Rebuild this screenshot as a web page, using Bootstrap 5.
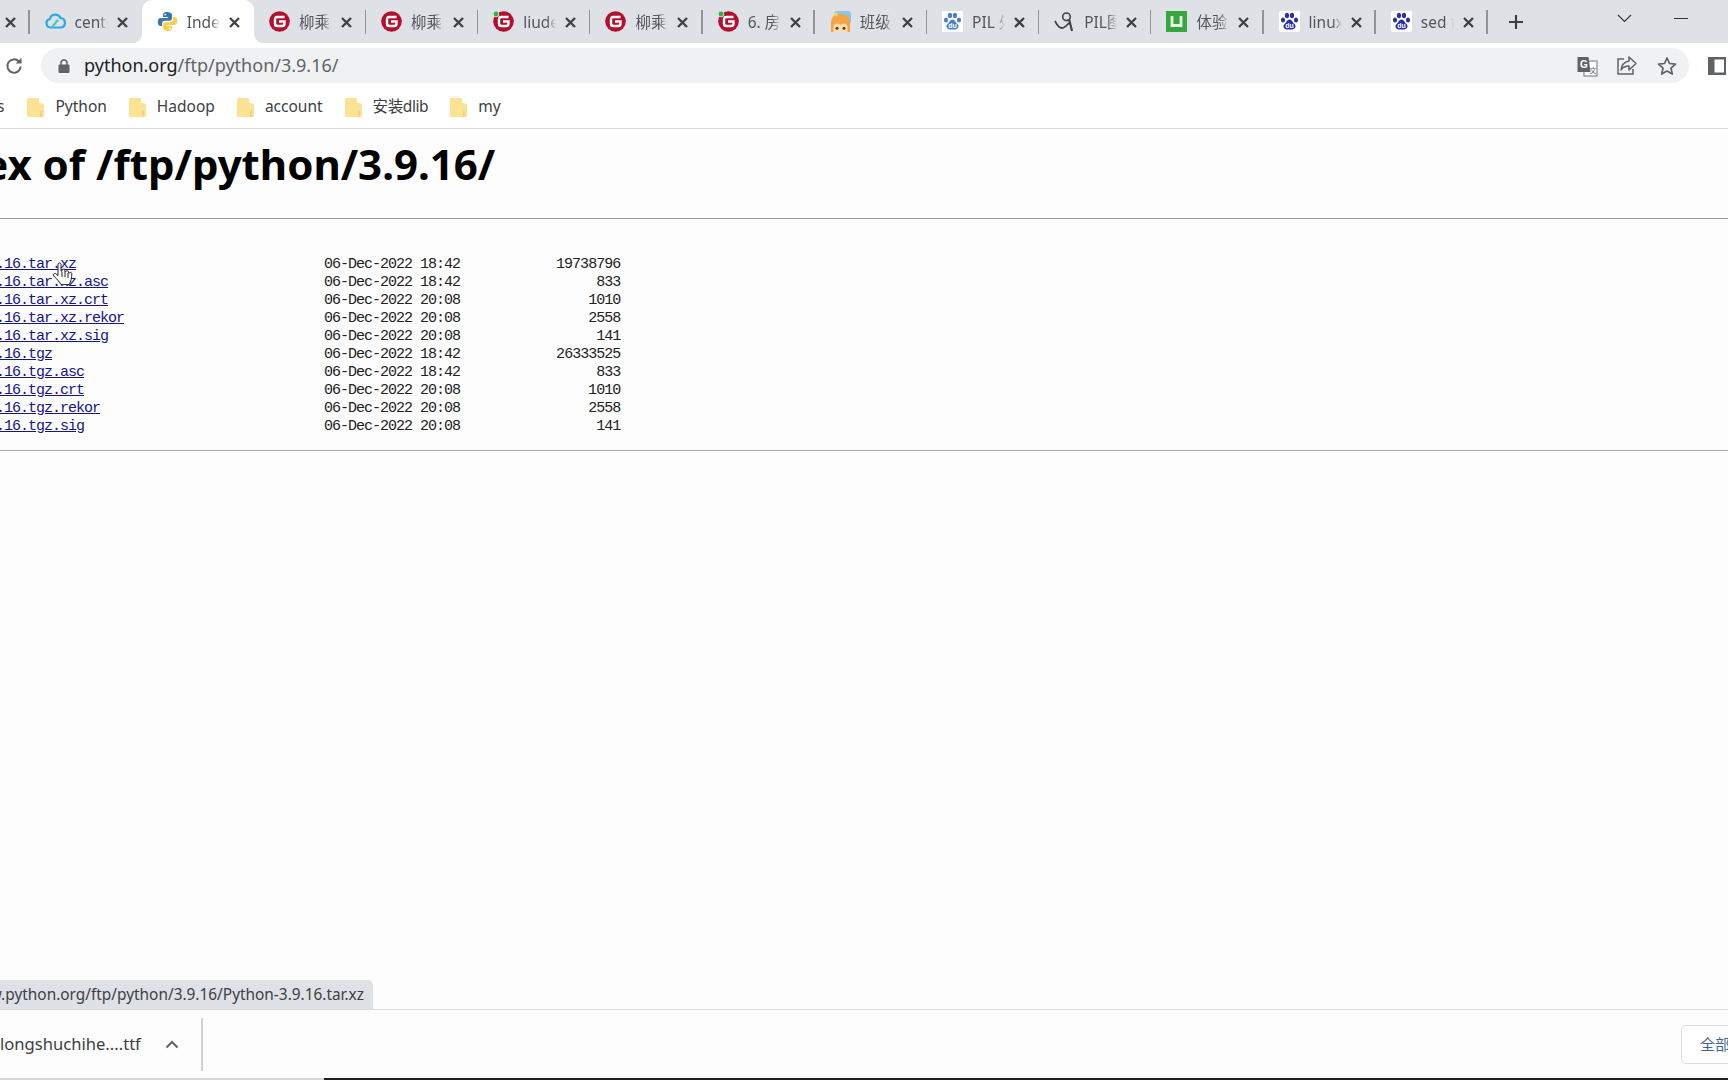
<!DOCTYPE html>
<html lang="en">
<head>
<meta charset="UTF-8">
<title>Index of /ftp/python/3.9.16/</title>
<link href="https://cdn.jsdelivr.net/npm/bootstrap@5.3.3/dist/css/bootstrap.min.css" rel="stylesheet">
<style>
    html, body { height: 100%; overflow: hidden; }
    body { font-family: "Noto Sans", "Noto Sans CJK SC", sans-serif; background: #fdfdfd; color: #000; }
    .shell { height: 1080px; width: 1728px; }
    .tabstrip { height: 43px; background: #dee1e6; padding-left: 0; flex: none; }
    .tab-item { width: 112.2px; height: 43px; flex: none; position: relative; padding-left: 15px; }
    .tab-item::after { content: ""; position: absolute; right: 0; top: 10px; height: 24px; width: 1.5px; background: #909498; }
    .tab-first { width: 29.5px; padding-left: 0; justify-content: flex-end; padding-right: 14px; }
    .tab-ico { width: 21px; height: 21px; flex: none; margin-top: -1px; }
    .tab-name { width: 33px; margin-left: 9px; margin-top: 1px; font-size: 15.5px; line-height: 21px; color: #53565a; white-space: nowrap; overflow: hidden;
        -webkit-mask-image: linear-gradient(to right, #000 72%, transparent 100%); mask-image: linear-gradient(to right, #000 72%, transparent 100%); }
    .tab-x { width: 11px; height: 11px; flex: none; margin-left: 9px; margin-top: 1px; }
    .tab-first .tab-x { margin-left: 0; }
    .tab-on { background: #fff; border-radius: 10px 10px 0 0; }
    .tab-on::after { left: -10px; right: auto; top: auto; bottom: 0; width: 10px; height: 10px; background: radial-gradient(circle at 0 0, #dee1e6 10px, #fff 10.5px); }
    .tab-on::before { content: ""; position: absolute; right: -10px; bottom: 0; width: 10px; height: 10px; background: radial-gradient(circle at 100% 0, #dee1e6 10px, #fff 10.5px); z-index: 1; }
    .tab-prev::after { display: none; }
    .tab-plus { width: 18px; height: 18px; margin-left: 19.5px; flex: none; }
    .win-chev { width: 15px; height: 9px; margin-left: 92px; margin-top: -7px; flex: none; }
    .win-min { width: 14px; margin-left: 42px; margin-top: -6px; background: #333; flex: none; height: 1.5px; }
    .toolbar { height: 45px; background: #fff; flex: none; }
    .reload-ico { width: 20px; height: 20px; margin-left: 4px; flex: none; }
    .omni { width: 1648px; height: 35px; margin-left: 17px; background: #eff1f2; border-radius: 18px; padding-left: 17px; flex: none; }
    .lock-ico { width: 12px; height: 14px; flex: none; }
    .omni-url { margin-left: 14px; font-size: 18px; color: #5f6368; }
    .omni-url b { font-weight: 400; color: #202124; }
    .omni-tools { margin-left: auto; padding-right: 11px; gap: 18px; }
    .omni-tools svg { width: 22px; height: 22px; }
    .side-ico { width: 18px; height: 18px; margin-left: 19px; flex: none; }
    .bmarks { height: 41px; padding-bottom: 2px; background: #fff; border-bottom: 1.5px solid #d6d8da; flex: none; font-size: 15.5px; color: #3c4043; }
    .bm-item { margin-right: 22px; }
    .bm-item svg { width: 17px; height: 19px; margin-right: 11px; flex: none; }
    .bm-tail { margin-left: -3px; margin-right: 23px; }
    .bm-cjk { letter-spacing: -.4px; }
    .pagearea { flex: 1 1 auto; min-height: 0; position: relative; background: #fdfdfd; overflow: hidden; }
    .pg-title { font-family: "Noto Sans", sans-serif; font-weight: 700; font-size: 42px; line-height: 60px; margin: 5px 0 0 -87px; white-space: nowrap; color: #000; }
    .pg-rule { margin: 24px 0 0; border: 0; border-top: 1.5px solid #9b9b9b; opacity: 1; }
    .listing { font-family: "Liberation Mono", monospace; font-size: 15px; letter-spacing: -1px; line-height: 18px; color: #222; margin: 19px 0 0 -84px; overflow: visible; }
    .listing a { color: #14148c; text-decoration: underline; }
    .pg-rule2 { margin: 14px 0 0; border: 0; border-top: 1.5px solid #a5a5a5; opacity: 1; }
    .hand-cursor { position: absolute; left: 52px; top: 133px; width: 22px; height: 26px; }
    .status-bubble { position: absolute; left: 0; bottom: 0; width: 373px; height: 29px; background: #dee1e6; border-top-right-radius: 5px; padding-right: 9px; font-size: 15.4px; color: #3c4043; white-space: nowrap; overflow: hidden; }
    .shelf { height: 69px; background: #fdfdfd; border-top: 1.5px solid #dcdcdc; flex: none; font-size: 16.6px; color: #3c4043; overflow: hidden; }
    .shelf-name { width: 139px; flex: none; white-space: nowrap; }
    .shelf-chev { width: 14px; height: 9px; margin-left: 26px; flex: none; }
    .shelf-sep { width: 1.5px; height: 53px; background: #d2d2d2; margin-left: 22px; flex: none; }
    .shelf-btn { flex: none; margin-left: auto; margin-right: -60px; width: 107px; height: 39px; border: 1.5px solid #dadce0; border-radius: 5px; background: #fff; color: #3f6795; font-size: 15px; text-align: left; padding: 0 0 0 18px; line-height: 36px; white-space: nowrap; }
    .edge-strip { height: 2px; flex: none; background: #d8d8d8; }
    .edge-dark { width: 1404px; height: 2px; background: #202020; }
</style>
</head>
<body>
<svg width="0" height="0" class="d-block position-absolute">
    <defs>
        <symbol id="i-x" viewBox="0 0 11 11"><path d="M1 1l9 9M10 1l-9 9" stroke="#3c4043" stroke-width="2.300" fill="none"/></symbol>
        <symbol id="i-cloud" viewBox="0 0 21 21"><path d="M5.500 16.500a4.300 4.300 0 0 1-.6-8.500A5.600 5.600 0 0 1 15.500 7a4.800 4.800 0 0 1 .5 9.500z" fill="none" stroke="#2fa8e0" stroke-width="2.200"/><path d="M5.500 16.500c3-.2 4.500-6 8-7.500" fill="none" stroke="#45c4cf" stroke-width="2.200"/></symbol>
        <symbol id="i-py" viewBox="0 0 21 21"><path d="M10.400 1C6.500 1 6 2.500 6 4v2h4.800v1H3.700C1.800 7 .8 8.600.8 11s1 4 2.600 4H5v-2.300c0-1.800 1.400-3 3.200-3h4.400c1.400 0 2.400-1.100 2.400-2.500V4c0-1.600-1.600-3-4.600-3z" fill="#3d78aa"/><path d="M10.600 20c3.900 0 4.400-1.500 4.400-3v-2h-4.800v-1h7.100c1.900 0 2.900-1.600 2.900-4s-1-4-2.600-4H16v2.300c0 1.800-1.400 3-3.200 3H8.400C7 11.300 6 12.400 6 13.800V17c0 1.600 1.600 3 4.600 3z" fill="#f7d14b"/><circle cx="8.200" cy="3.600" r=".9" fill="#fff"/><circle cx="12.800" cy="17.400" r=".9" fill="#fff"/></symbol>
        <symbol id="i-g" viewBox="0 0 21 21"><circle cx="10.500" cy="10.500" r="10.300" fill="#b30f2e"/><path d="M15.500 6H8.300C7 6 6 7 6 8.300v4.400C6 14 7 15 8.300 15h5c1.200 0 2.200-1 2.200-2.200V10.500H10" fill="none" stroke="#fff" stroke-width="2.400"/></symbol>
        <symbol id="i-gd" viewBox="0 0 21 21"><circle cx="10.500" cy="10.500" r="10.300" fill="#b30f2e"/><path d="M15.500 6H8.300C7 6 6 7 6 8.300v4.400C6 14 7 15 8.300 15h5c1.200 0 2.200-1 2.200-2.200V10.500H10" fill="none" stroke="#fff" stroke-width="2.400"/><circle cx="3" cy="3" r="3.200" fill="#dee1e6"/><circle cx="3" cy="3" r="2.400" fill="#2db83d"/></symbol>
        <symbol id="i-monkey" viewBox="0 0 21 21"><rect x="4" y="0" width="17" height="13" rx="3" fill="#8cc4ea"/><path d="M1 21V12C1 6 5 3 10.500 3S20 6 20 12v9z" fill="#f3a542"/><path d="M3.500 21v-5c0-2.500 2-3.500 3.500-3.500s2.500.6 3.500 1.400c1-.8 2-1.400 3.500-1.400s3.500 1 3.500 3.500v5z" fill="#fbdcb6"/><circle cx="7" cy="17.300" r="1.500" fill="#5b3c26"/><circle cx="14" cy="17.300" r="1.500" fill="#5b3c26"/><circle cx="6" cy="3.500" r="2" fill="#f5d54b"/></symbol>
        <symbol id="i-bd" viewBox="0 0 21 21"><rect width="21" height="21" rx="1" fill="#fff"/><g fill="#4a7fc6"><ellipse cx="4" cy="9" rx="2.100" ry="2.600"/><ellipse cx="8" cy="4.500" rx="2.100" ry="2.800"/><ellipse cx="13" cy="4.500" rx="2.100" ry="2.800"/><ellipse cx="17" cy="9" rx="2.100" ry="2.600"/><path d="M10.500 8.500c-2.500 0-3 3-5 4.500s-1 5.500 2.500 5.500h5c3.500 0 4.500-4 2.500-5.500s-2.500-4.500-5-4.500z"/></g><text x="10.500" y="17.300" text-anchor="middle" font-family="Liberation Sans, sans-serif" font-size="7" font-weight="700" fill="#fff">du</text></symbol>
        <symbol id="i-bdn" viewBox="0 0 21 21"><rect width="21" height="21" rx="2" fill="#fff"/><g fill="#2a2fa8"><ellipse cx="4" cy="9" rx="2.100" ry="2.600"/><ellipse cx="8" cy="4.500" rx="2.100" ry="2.800"/><ellipse cx="13" cy="4.500" rx="2.100" ry="2.800"/><ellipse cx="17" cy="9" rx="2.100" ry="2.600"/><path d="M10.500 8.500c-2.500 0-3 3-5 4.500s-1 5.500 2.500 5.500h5c3.500 0 4.500-4 2.500-5.500s-2.500-4.500-5-4.500z"/></g><text x="10.500" y="17.300" text-anchor="middle" font-family="Liberation Sans, sans-serif" font-size="7" font-weight="700" fill="#fff">du</text></symbol>
        <symbol id="i-pil" viewBox="0 0 21 21"><path d="M1 10c1.500 3 3 7 7 7 3 0 5-3 7-5" fill="none" stroke="#3f4347" stroke-width="1.800"/><circle cx="12.500" cy="5.800" r="3.800" fill="none" stroke="#3f4347" stroke-width="1.600"/><path d="M15 8l3 12" fill="none" stroke="#3f4347" stroke-width="2.200"/></symbol>
        <symbol id="i-u" viewBox="0 0 21 21"><rect width="21" height="21" fill="#36a640"/><path d="M6 5v9.500h9V5" fill="none" stroke="#e8f6e6" stroke-width="2.800"/></symbol>
        <symbol id="i-folder" viewBox="0 0 17 19"><path d="M1.500 0h9c1 0 1.500.5 1.500 1.500V4c0 .8.500 1.200 1.200 1.200H15c1 0 2 .8 2 1.800v10.500c0 1-.6 1.500-1.500 1.500h-14C.6 19 0 18.500 0 17.500v-16C0 .6.600 0 1.500 0z" fill="#fbe393"/><path d="M14 13v6" stroke="#e9c560" stroke-width="1"/></symbol>
    </defs>
</svg>
<div class="shell d-flex flex-column">
    <div class="tabstrip d-flex align-items-center">
        <div class="tab-item tab-first d-flex align-items-center"><svg class="tab-x"><use href="#i-x"/></svg></div>
        <div class="tab-item tab-prev d-flex align-items-center"><svg class="tab-ico"><use href="#i-cloud"/></svg><div class="tab-name">centos</div><svg class="tab-x"><use href="#i-x"/></svg></div>
        <div class="tab-item tab-on d-flex align-items-center"><svg class="tab-ico"><use href="#i-py"/></svg><div class="tab-name">Index of</div><svg class="tab-x"><use href="#i-x"/></svg></div>
        <div class="tab-item d-flex align-items-center"><svg class="tab-ico"><use href="#i-g"/></svg><div class="tab-name">柳乘风</div><svg class="tab-x"><use href="#i-x"/></svg></div>
        <div class="tab-item d-flex align-items-center"><svg class="tab-ico"><use href="#i-g"/></svg><div class="tab-name">柳乘风</div><svg class="tab-x"><use href="#i-x"/></svg></div>
        <div class="tab-item d-flex align-items-center"><svg class="tab-ico"><use href="#i-gd"/></svg><div class="tab-name">liude</div><svg class="tab-x"><use href="#i-x"/></svg></div>
        <div class="tab-item d-flex align-items-center"><svg class="tab-ico"><use href="#i-g"/></svg><div class="tab-name">柳乘风</div><svg class="tab-x"><use href="#i-x"/></svg></div>
        <div class="tab-item d-flex align-items-center"><svg class="tab-ico"><use href="#i-gd"/></svg><div class="tab-name">6. 房价</div><svg class="tab-x"><use href="#i-x"/></svg></div>
        <div class="tab-item d-flex align-items-center"><svg class="tab-ico"><use href="#i-monkey"/></svg><div class="tab-name">班级名</div><svg class="tab-x"><use href="#i-x"/></svg></div>
        <div class="tab-item d-flex align-items-center"><svg class="tab-ico"><use href="#i-bd"/></svg><div class="tab-name">PIL 处理</div><svg class="tab-x"><use href="#i-x"/></svg></div>
        <div class="tab-item d-flex align-items-center"><svg class="tab-ico"><use href="#i-pil"/></svg><div class="tab-name">PIL图像</div><svg class="tab-x"><use href="#i-x"/></svg></div>
        <div class="tab-item d-flex align-items-center"><svg class="tab-ico"><use href="#i-u"/></svg><div class="tab-name">体验</div><svg class="tab-x"><use href="#i-x"/></svg></div>
        <div class="tab-item d-flex align-items-center"><svg class="tab-ico"><use href="#i-bdn"/></svg><div class="tab-name">linux</div><svg class="tab-x"><use href="#i-x"/></svg></div>
        <div class="tab-item d-flex align-items-center"><svg class="tab-ico"><use href="#i-bdn"/></svg><div class="tab-name">sed 命令</div><svg class="tab-x"><use href="#i-x"/></svg></div>
        <svg class="tab-plus" viewBox="0 0 18 18"><path d="M9 2v14M2 9h14" stroke="#3c4043" stroke-width="2.200" fill="none"/></svg>
        <svg class="win-chev" viewBox="0 0 15 9"><path d="M1 1l6.500 6.500L14 1" stroke="#333" stroke-width="1.100" fill="none"/></svg>
        <div class="win-min"></div>
    </div>
    <div class="toolbar d-flex align-items-center">
        <svg class="reload-ico" viewBox="0 0 18 18"><path d="M15 9.500A6 6 0 1 1 13.200 4.700" fill="none" stroke="#5f6368" stroke-width="1.800"/><path d="M15.800 1.500v5.300h-5.300z" fill="#5f6368"/></svg>
        <div class="omni d-flex align-items-center">
            <svg class="lock-ico" viewBox="0 0 12 14"><path d="M3 6V4a3 3 0 0 1 6 0v2" fill="none" stroke="#5f6368" stroke-width="1.500"/><rect x=".5" y="5.500" width="11" height="8.500" rx="1.200" fill="#5f6368"/></svg>
            <div class="omni-url"><b>python.org</b>/ftp/python/3.9.16/</div>
            <div class="omni-tools d-flex align-items-center">
                <svg viewBox="0 0 22 22"><rect x="8" y="6" width="13" height="15" fill="#fff" stroke="#70757a" stroke-width="1"/><path d="M1.500 2h11l2 15h-13z" fill="#5f6368"/><text x="4" y="13" font-family="Liberation Sans, sans-serif" font-size="10" font-weight="700" fill="#fff">G</text><text x="13.500" y="18" font-family="Noto Sans CJK SC, sans-serif" font-size="7" fill="#5f6368">文</text></svg>
                <svg viewBox="0 0 22 22"><path d="M8 4H2v15h15v-5" fill="none" stroke="#5f6368" stroke-width="1.500"/><path d="M13 2l7 6.500-7 6.500v-4c-3.500 0-6 1-8 4 .5-5 3.500-8 8-9z" fill="none" stroke="#5f6368" stroke-width="1.500" stroke-linejoin="round"/></svg>
                <svg viewBox="0 0 22 22"><path d="M11 3l2.500 5.500 6 .7-4.500 4 1.300 5.900L11 16.100l-5.300 3 1.300-5.900-4.500-4 6-.7z" fill="none" stroke="#5f6368" stroke-width="1.700" stroke-linejoin="round"/></svg>
            </div>
        </div>
        <svg class="side-ico" viewBox="0 0 18 18"><rect width="18" height="18" fill="#5f6368"/><rect x="6.500" y="2.500" width="9.500" height="13" fill="#fff"/></svg>
    </div>
    <div class="bmarks d-flex align-items-center">
        <div class="bm-tail">s</div>
        <div class="bm-item d-flex align-items-center"><svg><use href="#i-folder"/></svg>Python</div>
        <div class="bm-item d-flex align-items-center"><svg><use href="#i-folder"/></svg>Hadoop</div>
        <div class="bm-item d-flex align-items-center"><svg><use href="#i-folder"/></svg>account</div>
        <div class="bm-item bm-cjk d-flex align-items-center"><svg><use href="#i-folder"/></svg>安装dlib</div>
        <div class="bm-item d-flex align-items-center"><svg><use href="#i-folder"/></svg>my</div>
    </div>
    <div class="pagearea">
        <h1 class="pg-title">Index of /ftp/python/3.9.16/</h1>
        <hr class="pg-rule">
<pre class="listing"><a href="#">../</a>
<a href="#">Python-3.9.16.tar.xz</a>                               06-Dec-2022 18:42            19738796
<a href="#">Python-3.9.16.tar.xz.asc</a>                           06-Dec-2022 18:42                 833
<a href="#">Python-3.9.16.tar.xz.crt</a>                           06-Dec-2022 20:08                1010
<a href="#">Python-3.9.16.tar.xz.rekor</a>                         06-Dec-2022 20:08                2558
<a href="#">Python-3.9.16.tar.xz.sig</a>                           06-Dec-2022 20:08                 141
<a href="#">Python-3.9.16.tgz</a>                                  06-Dec-2022 18:42            26333525
<a href="#">Python-3.9.16.tgz.asc</a>                              06-Dec-2022 18:42                 833
<a href="#">Python-3.9.16.tgz.crt</a>                              06-Dec-2022 20:08                1010
<a href="#">Python-3.9.16.tgz.rekor</a>                            06-Dec-2022 20:08                2558
<a href="#">Python-3.9.16.tgz.sig</a>                              06-Dec-2022 20:08                 141
</pre>
        <hr class="pg-rule2">
        <svg class="hand-cursor" viewBox="0 0 22 26"><path d="M6 2c0-1.500 3-1.500 3 0v7l1 .2V8c0-1.300 2.800-1.300 2.800 0v1.500l1 .2c0-1.200 2.700-1.200 2.700 .2v1l.8.2c.2-1 2.500-1 2.500.5 0 4-.6 7.500-2.600 11H9C7 19 4.500 17 1.800 14c-1.300-1.500.5-3.300 2-2.300L6 13.500z" fill="#fff" stroke="#222" stroke-width="1"/><path d="M10 10v5M13 10v5M16 11v5" stroke="#222" stroke-width="1"/></svg>
        <div class="status-bubble d-flex align-items-center justify-content-end">https://www.python.org/ftp/python/3.9.16/Python-3.9.16.tar.xz</div>
    </div>
    <div class="shelf d-flex align-items-center">
        <div class="shelf-name">longshuchihe....ttf</div>
        <svg class="shelf-chev" viewBox="0 0 14 9"><path d="M1.500 7.500L7 2l5.500 5.500" fill="none" stroke="#5f6368" stroke-width="2"/></svg>
        <div class="shelf-sep"></div>
        <button class="shelf-btn" type="button">全部显示</button>
    </div>
    <div class="edge-strip d-flex justify-content-end"><div class="edge-dark"></div></div>
</div>
<script src="https://cdn.jsdelivr.net/npm/bootstrap@5.3.3/dist/js/bootstrap.bundle.min.js"></script>
</body>
</html>
